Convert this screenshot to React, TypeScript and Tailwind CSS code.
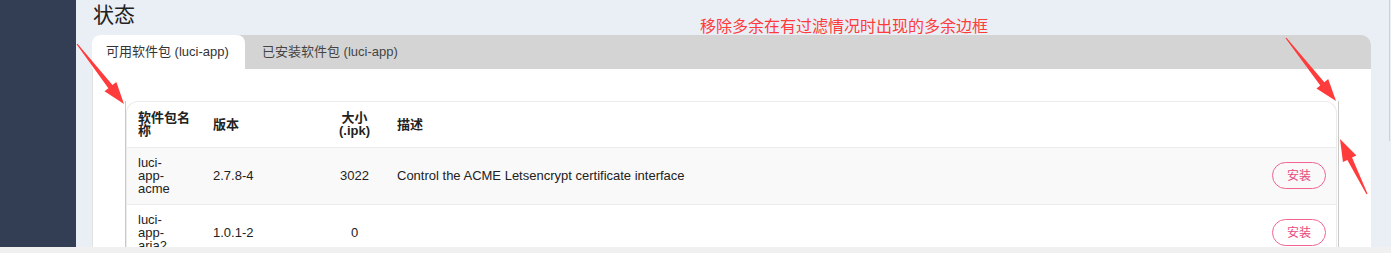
const FONT = {
  fontFamily: '"Liberation Sans", "Noto Sans CJK SC", sans-serif',
};

type Pkg = { name: string[]; version: string; size: string; desc: string };

const PACKAGES: Pkg[] = [
  {
    name: ["luci-", "app-", "acme"],
    version: "2.7.8-4",
    size: "3022",
    desc: "Control the ACME Letsencrypt certificate interface",
  },
  { name: ["luci-", "app-", "aria2"], version: "1.0.1-2", size: "0", desc: "" },
];

function arrowPoints(x1: number, y1: number, x2: number, y2: number) {
  const dx = x2 - x1;
  const dy = y2 - y1;
  const len = Math.hypot(dx, dy);
  const ux = dx / len;
  const uy = dy / len;
  const nx = -uy;
  const ny = ux;
  const head = 22;
  const bx = x2 - ux * head;
  const by = y2 - uy * head;
  const pt = (x: number, y: number, w: number) => `${x + nx * w},${y + ny * w}`;
  return [
    pt(x1, y1, 0.6),
    pt(bx, by, 2.6),
    pt(bx, by, 7.5),
    `${x2},${y2}`,
    pt(bx, by, -7.5),
    pt(bx, by, -2.6),
    pt(x1, y1, -0.6),
  ].join(" ");
}

function InstallButton() {
  return (
    <button
      type="button"
      className="h-[27px] w-[54px] rounded-full border border-[#f0648e] text-[12px] text-[#e9497c]"
    >
      安装
    </button>
  );
}

export default function App() {
  return (
    <div className="relative flex h-[253px] w-[1391px] flex-col overflow-hidden text-[#222]" style={FONT}>
      <div className="flex h-[247px] overflow-hidden">
        <aside className="w-[76px] shrink-0 bg-[#333d53]" />
        <main className="flex-1 bg-[#eaeff6] pl-[16px] pr-[20px]">
          <h2 className="pl-[1px] pt-[1px] text-[21px] leading-[28px] text-[#222]">状态</h2>

          <div className="mt-[6px]">
            <div className="flex h-[34px] rounded-tl-[8px] rounded-tr-[10px] bg-[#d4d4d4]">
              <div className="flex w-[153px] items-center rounded-t-[8px] bg-white pl-[14px] text-[13px] text-[#333]">
                可用软件包 (luci-app)
              </div>
              <div className="flex items-center pl-[17px] text-[13px] text-[#444]">
                已安装软件包 (luci-app)
              </div>
            </div>

            <div className="border-l border-[#e2e2e2] bg-white pl-[32px] pr-[32px] pt-[32px]">
              <div className="border-x border-[#c9c9c9] pr-[1px]">
                <div className="overflow-hidden rounded-t-[12px] border border-b-0 border-[#ebebeb]">
                  <table className="w-full table-fixed border-collapse text-[13px]">
                    <colgroup>
                      <col className="w-[75px]" />
                      <col className="w-[121px]" />
                      <col className="w-[63px]" />
                      <col />
                      <col className="w-[80px]" />
                    </colgroup>
                    <thead>
                      <tr className="h-[45px]">
                        <th className="px-[11px] text-left font-bold leading-[13px]">软件包名称</th>
                        <th className="px-[11px] text-left font-bold">版本</th>
                        <th className="text-center font-bold leading-[13px]">
                          大小
                          <br />
                          (.ipk)
                        </th>
                        <th className="px-[11px] text-left font-bold">描述</th>
                        <th />
                      </tr>
                    </thead>
                    <tbody>
                      {PACKAGES.map((p, i) => (
                        <tr
                          key={p.version}
                          className={`h-[57px] border-t border-[#ececec] ${i === 0 ? "bg-[#f9f9f9]" : "bg-white"}`}
                        >
                          <td className="px-[11px] align-middle leading-[13px] text-[#222]">
                            {p.name.map((l) => (
                              <div key={l}>{l}</div>
                            ))}
                          </td>
                          <td className="px-[11px]">{p.version}</td>
                          <td className="text-center">{p.size}</td>
                          <td className="px-[11px]">{p.desc}</td>
                          <td className="pr-[10px] text-right">
                            <InstallButton />
                          </td>
                        </tr>
                      ))}
                    </tbody>
                  </table>
                </div>
              </div>
            </div>
          </div>
        </main>
      </div>
      <div className="h-[6px] bg-[#f0f0f0]" />

      {/* annotation overlay */}
      <div className="absolute left-[700px] top-[15px] text-[16px] leading-[20px] text-[#ff3b3b]" style={{ fontFamily: '"Noto Sans CJK SC", sans-serif' }}>
        移除多余在有过滤情况时出现的多余边框
      </div>
      <svg className="pointer-events-none absolute left-0 top-0" width={1391} height={253}>
        <polygon points={arrowPoints(77, 44, 124, 104)} fill="#ff3b3b" />
        <polygon points={arrowPoints(1286, 38, 1336, 101)} fill="#ff3b3b" />
        <polygon points={arrowPoints(1367, 194, 1340, 139)} fill="#ff3b3b" />
      </svg>
      <div className="absolute right-[1px] top-0 h-[141px] w-[1px] bg-[#cfcfcf]" />
    </div>
  );
}
